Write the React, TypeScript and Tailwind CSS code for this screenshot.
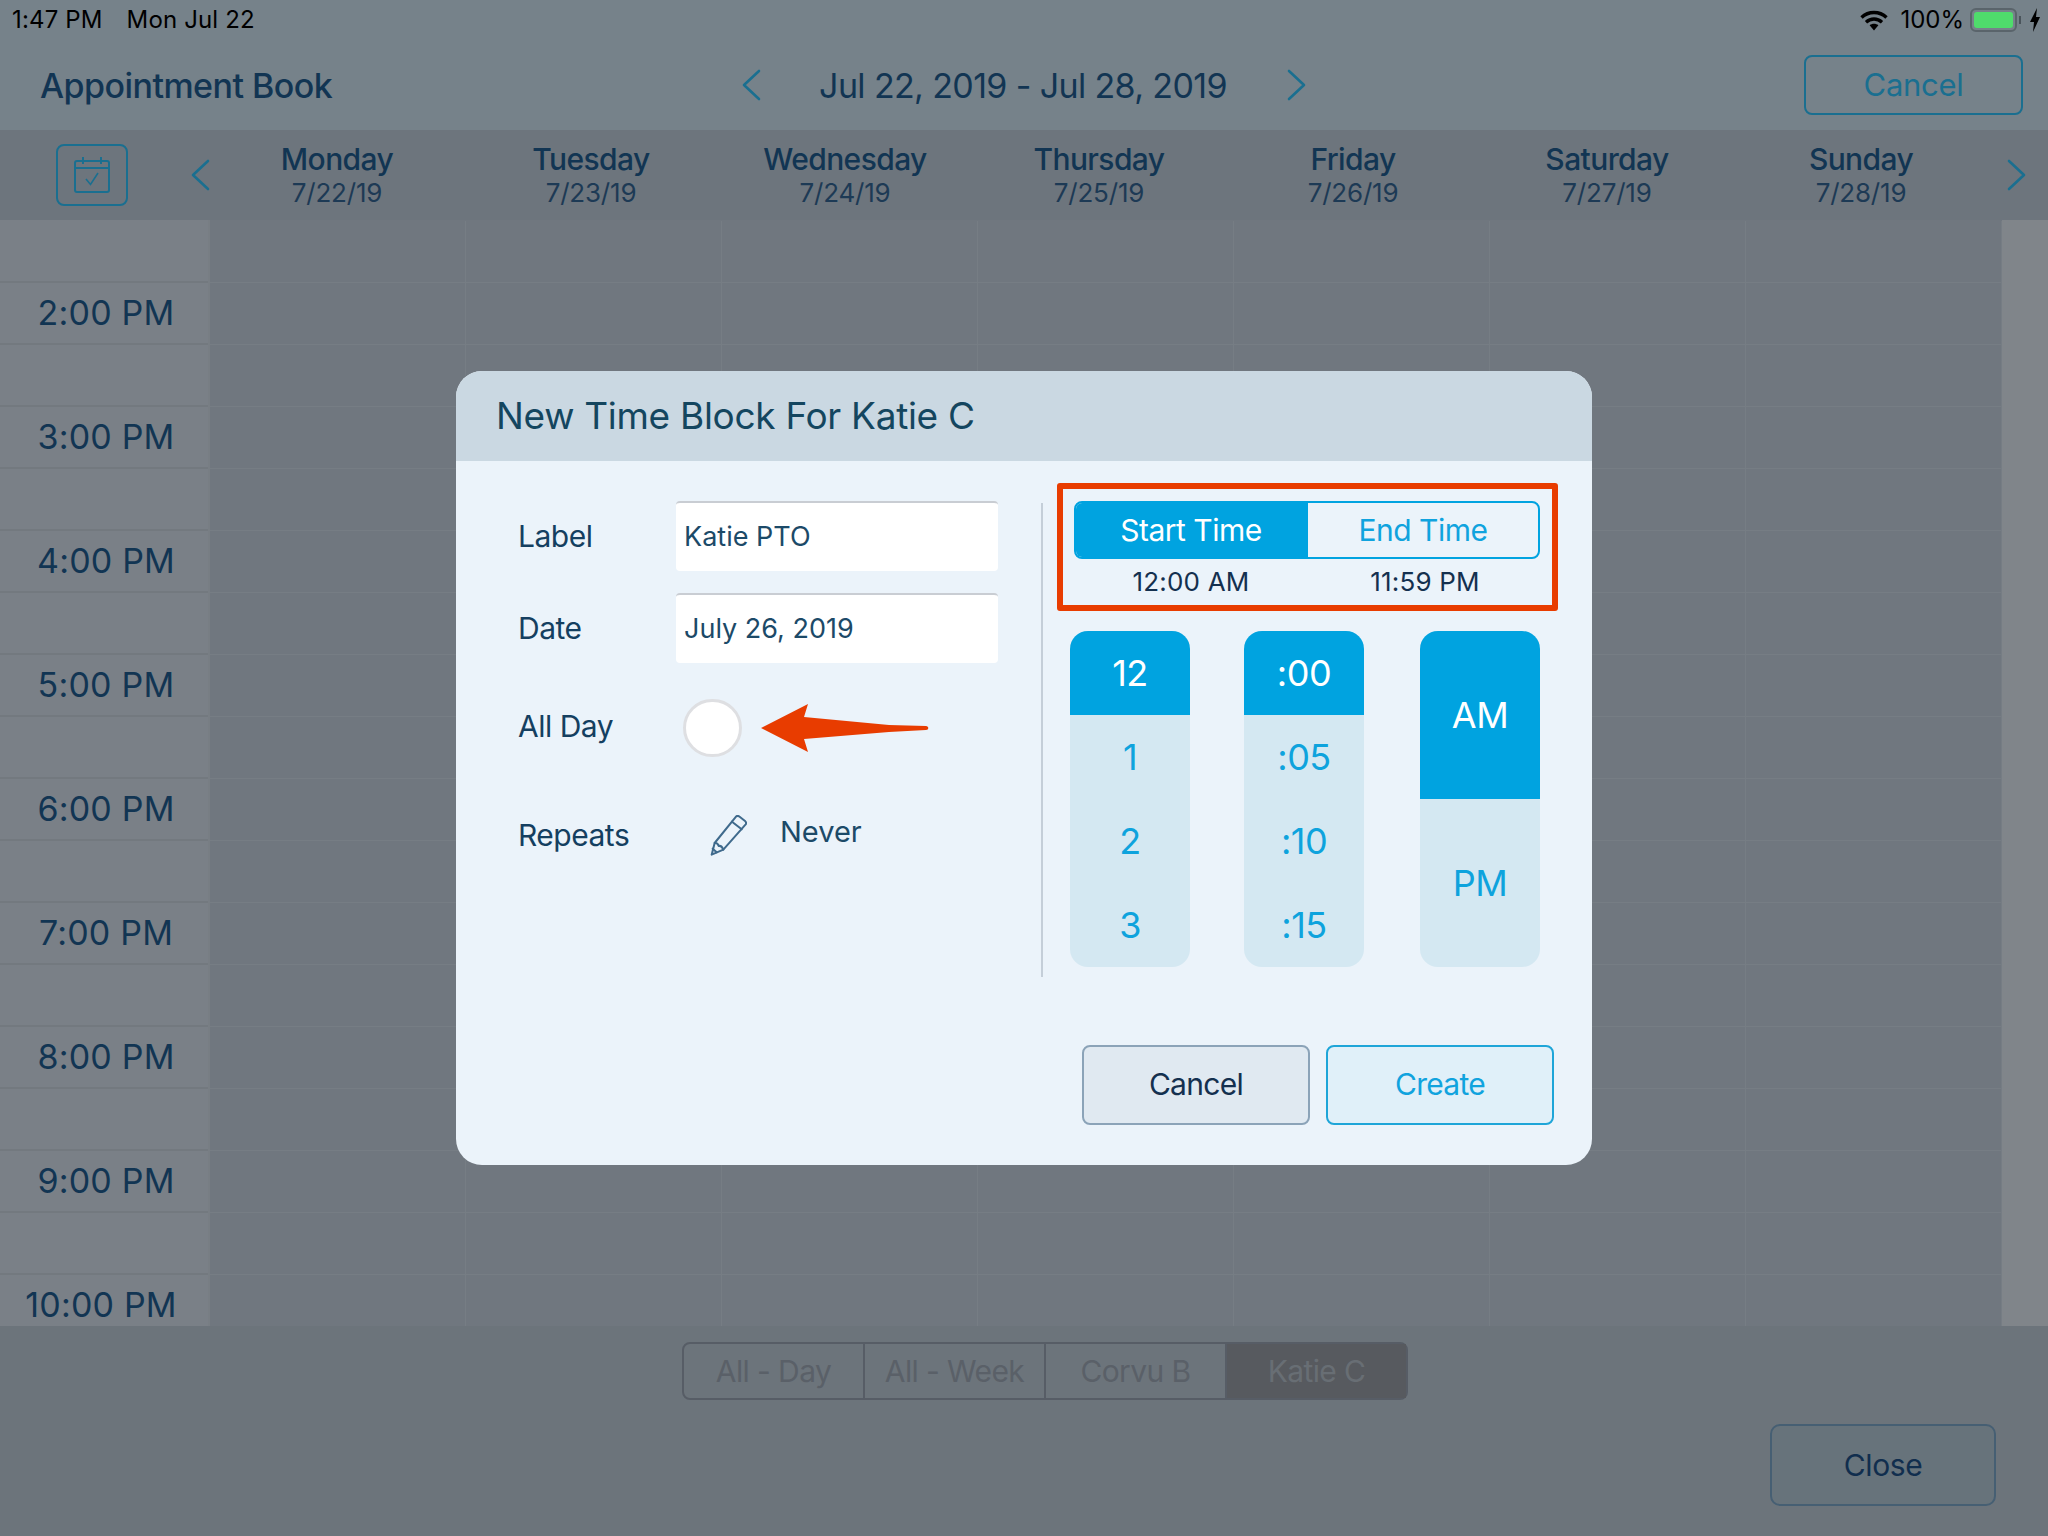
const days = [
  { name: "Monday", date: "7/22/19" },
  { name: "Tuesday", date: "7/23/19" },
  { name: "Wednesday", date: "7/24/19" },
  { name: "Thursday", date: "7/25/19" },
  { name: "Friday", date: "7/26/19" },
  { name: "Saturday", date: "7/27/19" },
  { name: "Sunday", date: "7/28/19" },
];

const rows = [
  "", "2:00 PM", "", "3:00 PM", "", "4:00 PM", "", "5:00 PM", "", "6:00 PM",
  "", "7:00 PM", "", "8:00 PM", "", "9:00 PM", "", "10:00 PM",
];

const hours = ["12", "1", "2", "3"];
const minutes = [":00", ":05", ":10", ":15"];
const meridiem = ["AM", "PM"];
const staff = ["All - Day", "All - Week", "Corvu B"];

function Chevron({ right }: { right?: boolean }) {
  return (
    <svg width="20" height="32" viewBox="0 0 20 32" fill="none" stroke="#1a6f90" strokeWidth="2.6" strokeLinecap="round" strokeLinejoin="round">
      <path d={right ? "M2 2l15 14L2 30" : "M18 2L3 16l15 14"} />
    </svg>
  );
}

function Wifi() {
  return (
    <svg width="28" height="21" viewBox="0 0 28 21" fill="none" stroke="#000" strokeWidth="3.4">
      <path d="M1.5 7.5C8.5 .8 19.5 .8 26.5 7.5" />
      <path d="M6 12.2c4.7-4.2 11.3-4.2 16 0" />
      <path d="M14 20.5l-4.4-5.2c2.6-2 6.2-2 8.8 0z" fill="#000" stroke="none" />
    </svg>
  );
}

function CalendarCheck() {
  return (
    <svg width="38" height="38" viewBox="0 0 38 38" fill="none" stroke="#1a6f90" strokeWidth="2">
      <rect x="2" y="5" width="34" height="31" rx="2" />
      <path d="M2 12h34M10 1v7M28 1v7" />
      <path d="M13 23l4.5 5.5L25 17" strokeWidth="1.6" />
    </svg>
  );
}

function Pencil() {
  return (
    <svg width="37" height="41" viewBox="0 0 111 123" fill="none" stroke="#3f6a8c" strokeWidth="6" strokeLinejoin="round" strokeLinecap="round">
      <path d="M78 5c3-3 6-3 9-1l19 15c3 3 3 6 1 9L40 104 5 119l9-35z" />
      <path d="M66 20l29 23M14 84c8-1 10 2 12 9 7-2 10 1 14 11M8 101l12 11" />
    </svg>
  );
}

function Picker({ items, tall }: { items: string[]; tall?: boolean }) {
  return (
    <div className="w-[120px] h-[336px] rounded-[18px] overflow-hidden bg-[#d4e8f2] flex flex-col">
      {items.map((item, i) => (
        <div
          key={item}
          className={
            "flex items-center justify-center text-[36px] tracking-[-0.5px] " +
            (tall ? "h-[168px] " : "h-[84px] ") +
            (i === 0 ? "bg-[#00a3e0] text-white" : "text-[#0ea3dd]")
          }
        >
          {item}
        </div>
      ))}
    </div>
  );
}

function FormLabel({ text }: { text: string }) {
  return <div className="w-[158px] text-[#143f60] text-[30px] tracking-[-0.5px]">{text}</div>;
}

function TextBox({ value }: { value: string }) {
  return (
    <div className="w-[322px] h-[70px] bg-white rounded-[4px] border-t-2 border-[#c9cdd3] flex items-center pl-[8px] text-[27px] text-[#1c4a68]">
      {value}
    </div>
  );
}

export default function App() {
  return (
    <div className="relative w-[2048px] h-[1536px] overflow-hidden flex flex-col bg-[#6c747b] font-['Inter',sans-serif]">
      {/* status bar + header */}
      <div className="bg-[#76828a] h-[40px] flex items-center justify-between pl-[12px] pr-[8px] text-[24px] text-black">
        <div className="flex gap-[24px] tracking-[0.15px]">
          <span>1:47 PM</span>
          <span>Mon Jul 22</span>
        </div>
        <div className="flex items-center">
          <Wifi />
          <span className="ml-[12px]">100%</span>
          <div className="ml-[6px] w-[47px] h-[24px] rounded-[6px] border-2 border-[#5a646b] p-[2px]">
            <div className="w-full h-full rounded-[3px] bg-[#4fdc6c]" />
          </div>
          <div className="w-[2px] h-[8px] ml-[2px] bg-[#4a545b]" />
          <svg className="ml-[9px]" width="10" height="24" viewBox="0 0 10 24" fill="#000">
            <path d="M7 0L0 14h4l-1 10 7-15H6z" />
          </svg>
        </div>
      </div>
      <div className="bg-[#76828a] h-[90px] grid grid-cols-[1fr_auto_1fr] items-center px-[40px]">
        <div className="text-[34px] font-medium tracking-[-0.55px] text-[#123553]">Appointment Book</div>
        <div className="flex items-center text-[34px] tracking-[-0.63px] text-[#123553]">
          <Chevron />
          <span className="ml-[58px] mr-[60px]">Jul 22, 2019 - Jul 28, 2019</span>
          <Chevron right />
        </div>
        <div className="flex justify-end">
          <div className="-mr-[15px] w-[219px] h-[60px] rounded-[8px] border-2 border-[#1a6f90] flex items-center justify-center text-[31px] tracking-[-0.3px] text-[#1a6f90]">
            Cancel
          </div>
        </div>
      </div>

      {/* week days */}
      <div className="bg-[#6d757d] h-[90px] flex items-center text-[#123553]">
        <div className="w-[210px] flex items-center pl-[56px]">
          <div className="w-[72px] h-[62px] rounded-[8px] border-2 border-[#1a6f90] flex items-center justify-center">
            <CalendarCheck />
          </div>
          <div className="ml-[62px]">
            <Chevron />
          </div>
        </div>
        {days.map((d) => (
          <div key={d.name} className="w-[254px] flex flex-col items-center">
            <div className="text-[30px] leading-[36px] font-medium tracking-[-0.6px]">{d.name}</div>
            <div className="text-[26px] leading-[32px] tracking-[-0.2px] text-[#1d3a55]">{d.date}</div>
          </div>
        ))}
        <div className="ml-[19px]">
          <Chevron right />
        </div>
      </div>

      {/* time grid */}
      <div className="h-[1106px] flex overflow-hidden">
        <div className="w-[210px] shrink-0 pt-[1px] bg-[#7a8087] border-r-2 border-[#787e84]">
          {rows.map((t, i) => (
            <div
              key={i}
              className={
                "h-[62px] pb-[2px] border-b-2 border-[#73797f] flex items-center justify-center text-[34px] tracking-[0.2px] text-[#123553] " +
                (t.length > 7 ? "pr-[6px]" : "pl-[4px]")
              }
            >
              {t}
            </div>
          ))}
        </div>
        <div className="w-[1792px] shrink-0 pt-[1px] grid grid-cols-7 auto-rows-[62px] bg-[#70777f]">
          {rows.flatMap((_, r) =>
            days.map((d) => <div key={r + d.name} className="border-r border-b border-[#767d84]" />)
          )}
        </div>
        <div className="flex-1 bg-[#80858a]" />
      </div>

      {/* footer */}
      <div className="h-[210px] bg-[#6c747b] relative">
        <div className="pt-[16px] pl-[42px] flex justify-center">
          <div className="w-[726px] h-[58px] rounded-[8px] border-2 border-[#575d66] flex text-[30px] tracking-[-0.6px] text-[#5a6068]">
            {staff.map((s) => (
              <div key={s} className="w-[181px] border-r-2 border-[#575d66] flex items-center justify-center">
                {s}
              </div>
            ))}
            <div className="flex-1 bg-[#575a5f] text-[#686e74] flex items-center justify-center">Katie C</div>
          </div>
        </div>
        <div className="absolute right-[52px] bottom-[30px] w-[226px] h-[82px] rounded-[10px] border-2 border-[#465f73] bg-[#67737b] flex items-center justify-center text-[30px] tracking-[-0.4px] text-[#112e4e]">
          Close
        </div>
      </div>

      {/* modal */}
      <div className="absolute inset-0 flex items-center justify-center">
        <div className="relative w-[1136px] h-[794px] rounded-[26px] overflow-hidden bg-[#ebf3fa] flex flex-col">
          <div className="h-[90px] bg-[#cad8e2] flex items-center pl-[40px] text-[37px] tracking-[-0.3px] text-[#14465f]">
            New Time Block For Katie C
          </div>
          <div className="flex-1 flex">
            <div className="w-[585px] pl-[62px] pt-[40px]">
              <div className="flex items-center">
                <FormLabel text="Label" />
                <TextBox value="Katie PTO" />
              </div>
              <div className="flex items-center mt-[22px]">
                <FormLabel text="Date" />
                <TextBox value="July 26, 2019" />
              </div>
              <div className="flex items-center mt-[36px]">
                <div className="-mt-[3px]">
                  <FormLabel text="All Day" />
                </div>
                <div className="ml-[7px] w-[59px] h-[58px] rounded-full bg-white border-[3px] border-[#dedfe2]" />
              </div>
              <div className="flex items-center mt-[48px] h-[60px]">
                <FormLabel text="Repeats" />
                <div className="ml-[34px]">
                  <Pencil />
                </div>
                <span className="ml-[33px] -mt-[6px] text-[29px] text-[#1c4a68]">Never</span>
              </div>
            </div>
            <div className="w-[2px] h-[474px] mt-[42px] bg-[#c4ced8]" />
            <div className="pl-[31px] pt-[40px]">
              <div className="w-[466px] h-[58px] rounded-[8px] border-2 border-[#00a3e0] overflow-hidden flex text-[30px] tracking-[-0.5px]">
                <div className="w-[232px] pr-[2px] bg-[#00a3e0] text-white flex items-center justify-center">Start Time</div>
                <div className="flex-1 text-[#10a3de] flex items-center justify-center">End Time</div>
              </div>
              <div className="mt-[2px] h-[40px] flex items-center text-[26px] tracking-[0.2px] text-[#14304f]">
                <div className="w-[234px] text-center">12:00 AM</div>
                <div className="w-[234px] text-center">11:59 PM</div>
              </div>
              <div className="mt-[30px] -ml-[4px] w-[470px] flex gap-[54px]">
                <Picker items={hours} />
                <Picker items={minutes} />
                <div className="ml-[2px]">
                  <Picker items={meridiem} tall />
                </div>
              </div>
            </div>
          </div>
          <div className="flex justify-end gap-[16px] pr-[38px] pb-[40px] text-[30px] tracking-[-0.7px]">
            <div className="w-[228px] h-[80px] pb-[2px] rounded-[8px] border-2 border-[#8ba3b8] bg-[#e0e9f1] text-[#14304f] flex items-center justify-center">
              Cancel
            </div>
            <div className="w-[228px] h-[80px] pb-[2px] rounded-[8px] border-2 border-[#1ea5d8] bg-[#e0f0f9] text-[#10a3de] flex items-center justify-center">
              Create
            </div>
          </div>

          {/* annotations */}
          <div className="absolute left-[601px] top-[112px] w-[501px] h-[128px] rounded-[3px] border-[6px] border-[#e83c00]" />
          <svg className="absolute left-[305px] top-[333px]" width="169" height="48" viewBox="0 0 169 48" fill="#e83c00">
            <path d="M0 24L47 0l-4 13 85 8 37 1c3 0 3 4 0 4l-37 2-85 7 4 13z" />
          </svg>
        </div>
      </div>
    </div>
  );
}
